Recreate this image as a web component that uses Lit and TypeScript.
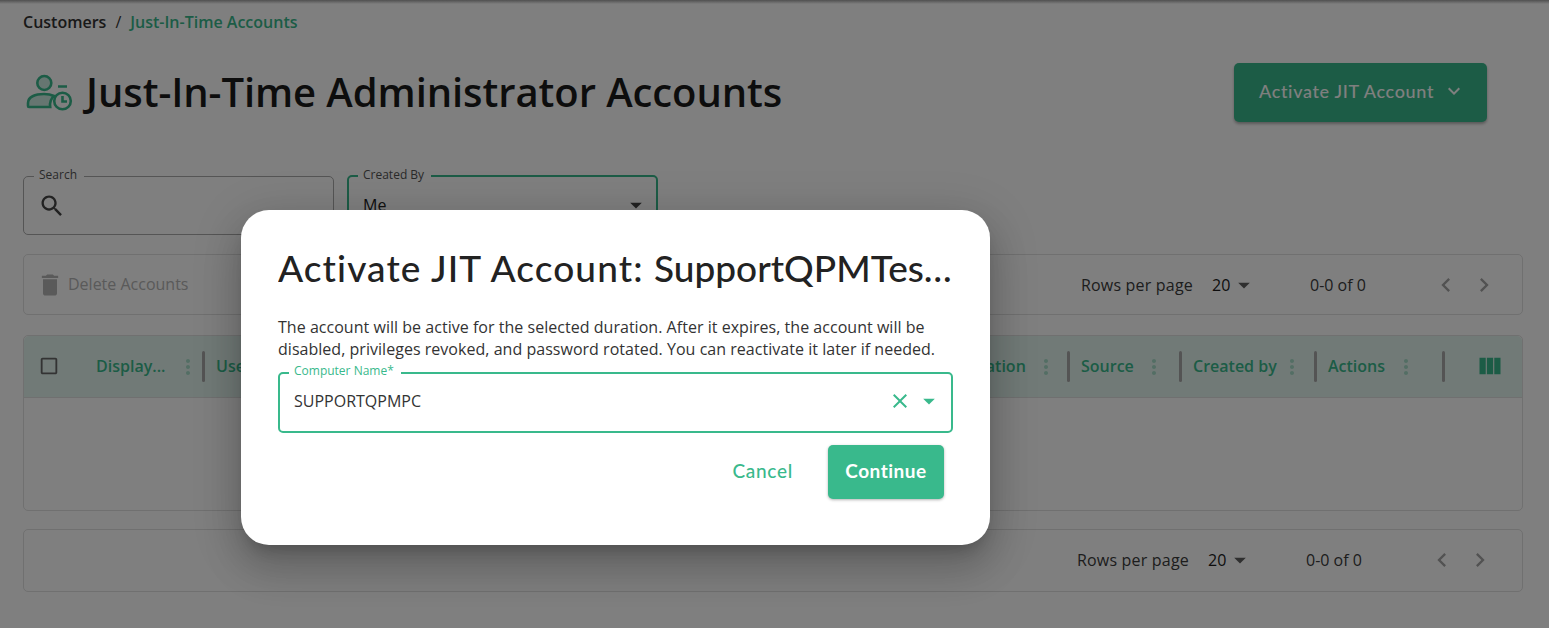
import { LitElement, html, css, svg } from "lit";
import { customElement, property } from "lit/decorators.js";

const icon = (d: string, size = 24) => html`<svg class="icon" width=${size} height=${size} viewBox="0 0 24 24" fill="currentColor">${svg`<path d=${d}></path>`}</svg>`;

const SEARCH = "M15.5 14h-.79l-.28-.27C15.41 12.59 16 11.11 16 9.5 16 5.91 13.09 3 9.5 3S3 5.91 3 9.5 5.91 16 9.5 16c1.61 0 3.09-.59 4.23-1.57l.27.28v.79l5 4.99L20.49 19l-4.99-5zm-6 0C7.01 14 5 11.99 5 9.5S7.01 5 9.5 5 14 7.01 14 9.5 11.99 14 9.5 14z";
const DELETE = "M6 19c0 1.1.9 2 2 2h8c1.1 0 2-.9 2-2V7H6v12zM19 4h-3.5l-1-1h-5l-1 1H5v2h14V4z";
const CLOSE = "M19 6.41L17.59 5 12 10.59 6.41 5 5 6.41 10.59 12 5 17.59 6.41 19 12 13.41 17.59 19 19 17.59 13.41 12z";
const DROP = "M7 10l5 5 5-5z";
const LEFT = "M15.41 7.41 14 6l-6 6 6 6 1.41-1.41L10.83 12z";
const RIGHT = "M10 6 8.59 7.41 13.17 12l-4.58 4.59L10 18l6-6z";
const EXPAND = "M16.59 8.59 12 13.17 7.41 8.59 6 10l6 6 6-6z";
const DOTS = "M12 8c1.1 0 2-.9 2-2s-.9-2-2-2-2 .9-2 2 .9 2 2 2zm0 2c-1.1 0-2 .9-2 2s.9 2 2 2 2-.9 2-2-.9-2-2-2zm0 6c-1.1 0-2 .9-2 2s.9 2 2 2 2-.9 2-2-.9-2-2-2z";
const COLUMNS = "M14.67 5v14H9.33V5h5.34zm1 14H21V5h-5.33v14zm-7.34 0V5H3v14h5.33z";
const CHECKBOX = "M19 5v14H5V5h14m0-2H5c-1.1 0-2 .9-2 2v14c0 1.1.9 2 2 2h14c1.1 0 2-.9 2-2V5c0-1.1-.9-2-2-2z";

const COLS = [
  { label: "Display...", width: 121, dots: 100 },
  { label: "Username", width: 186, dots: 120 },
  { label: "Status", width: 186, dots: 120 },
  { label: "Computer", width: 186, dots: 120 },
  { label: "Expires", width: 183, dots: 120 },
  { label: "Duration", width: 124, dots: 96 },
  { label: "Source", width: 112, dots: 80 },
  { label: "Created by", width: 135, dots: 106 },
  { label: "Actions", width: 128, dots: 85 },
];

@customElement("row-pager")
class RowPager extends LitElement {
  @property({ type: Number }) inset = 24;

  static styles = css`
    :host {
      display: flex;
      align-items: center;
      justify-content: flex-end;
      font-family: "Open Sans", sans-serif;
      font-size: 16px;
      font-weight: 500;
      color: #3a3a3a;
    }
    .icon { display: block; }
    .label { letter-spacing: 0.2px; }
    .size {
      display: flex;
      align-items: center;
      margin-left: 19px;
      color: #1a1a1a;
      width: 76px;
    }
    .size .icon { color: #5e5e5e; }
    .range { margin-left: 22px; width: 122px; }
    .nav { display: flex; gap: 10px; color: #a4a4a4; }
  `;

  render() {
    return html`
      <span class="label">Rows per page</span>
      <span class="size">20 ${icon(DROP, 28)}</span>
      <span class="range">0-0 of 0</span>
      <span class="nav" style="margin-right: ${this.inset}px">${icon(LEFT, 28)}${icon(RIGHT, 28)}</span>
    `;
  }
}

@customElement("app-root")
export class AppRoot extends LitElement {
  static styles = css`
    :host {
      display: block;
      position: relative;
      height: 628px;
      overflow: hidden;
      background: #fff;
      font-family: "Open Sans", sans-serif;
      color: #333;
    }
    .icon { display: block; }
    .page { padding: 12px 26px 0 23px; }
    .crumbs {
      display: flex;
      font-size: 16px;
      font-weight: 600;
      line-height: 21px;
      color: #333;
    }
    .crumbs .sep { margin: 0 9px; font-weight: 400; }
    .crumbs .here { color: #39b98c; }
    .head {
      display: flex;
      align-items: center;
      justify-content: space-between;
      margin-top: 30px;
      padding-right: 36px;
    }
    .title { display: flex; align-items: center; }
    .title svg { margin: 0 13px 0 3px; }
    h1 {
      margin: 0 0 2px;
      font-size: 40px;
      font-weight: 600;
      line-height: 57px;
      letter-spacing: -0.08px;
      color: #1b1b1b;
    }
    .activate {
      display: flex;
      align-items: center;
      justify-content: space-between;
      box-sizing: border-box;
      width: 253px;
      height: 59px;
      padding: 0 21px 3px 25px;
      border-radius: 5px;
      background: #39b98c;
      color: #fff;
      font-family: Lato, sans-serif;
      font-size: 18px;
      font-weight: 500;
      letter-spacing: 0.65px;
      box-shadow: 0 2px 3px rgba(0, 0, 0, 0.3);
    }
    .filters { display: flex; gap: 13px; margin-top: 47px; }
    fieldset {
      box-sizing: border-box;
      display: flex;
      align-items: center;
      justify-content: space-between;
      width: 311px;
      height: 66px;
      margin: 0;
      padding: 0 15px 6px 14px;
      border: 1px solid #aaa;
      border-radius: 5px;
      min-width: 0;
      font-size: 16px;
    }
    legend {
      padding: 0 7px 0 5px;
      margin-left: -4px;
      font-size: 12px;
      line-height: 14px;
      color: #555;
      transform: translateY(-1px);
    }
    fieldset.focus { border: 2px solid #39b98c; padding: 0 6px 6px 14px; }
    fieldset.focus legend { margin-left: -5px; }
    .filters .icon { color: #444; }
    .search { color: #333; }
    .me { color: #222; }
    .box {
      border: 1px solid #e0e0e0;
      border-radius: 5px;
    }
    .toolbar {
      display: flex;
      align-items: center;
      justify-content: space-between;
      box-sizing: border-box;
      height: 61px;
      margin-top: 19px;
      padding-left: 12px;
    }
    .remove {
      display: flex;
      align-items: center;
      gap: 4px;
      font-size: 16px;
      line-height: 20px;
      color: #b4b4b4;
    }
    .remove span { margin-top: -2px; }
    .table { margin-top: 20px; height: 176px; box-sizing: border-box; }
    .cols {
      display: flex;
      align-items: center;
      box-sizing: border-box;
      height: 62px;
      padding-bottom: 1px;
      background: #e3f5ef;
      border-bottom: 1px solid #e0e0e0;
      border-radius: 5px 5px 0 0;
      color: #39b98c;
      font-size: 16px;
      font-weight: 600;
    }
    .check { width: 60px; padding-left: 14px; box-sizing: border-box; color: #666; }
    .col {
      position: relative;
      flex: none;
      box-sizing: border-box;
      height: 31px;
      line-height: 31px;
      padding-left: 11px;
      white-space: nowrap;
    }
    .check + .col { padding-left: 12px; }
    .rule {
      position: absolute;
      right: 0;
      top: 0;
      width: 3px;
      height: 31px;
      border-radius: 2px;
      background: #a9a9a9;
    }
    .dots { position: absolute; top: 4px; color: #a6dcc9; }
    .picker { margin-left: 31px; color: #39b98c; }
    .foot {
      display: flex;
      justify-content: flex-end;
      height: 63px;
      margin-top: 18px;
      padding-bottom: 2px;
      box-sizing: border-box;
    }
    .backdrop {
      position: absolute;
      inset: 0;
      background: rgba(0, 0, 0, 0.5);
    }
    .edge {
      position: absolute;
      left: 0;
      right: 0;
      top: 0;
      height: 4px;
      background: linear-gradient(#505050, rgba(80, 80, 80, 0));
    }
    .modal {
      position: absolute;
      left: 241px;
      top: 210px;
      width: 749px;
      height: 335px;
      box-sizing: border-box;
      padding: 34px 37px 0 37px;
      border-radius: 28px;
      background: #fff;
      box-shadow: 0 11px 15px -7px rgba(0, 0, 0, 0.2), 0 24px 38px 3px rgba(0, 0, 0, 0.14), 0 9px 46px 8px rgba(0, 0, 0, 0.12);
    }
    h2 {
      margin: 0;
      font-family: Lato, sans-serif;
      font-size: 37px;
      font-weight: 500;
      line-height: 48px;
      letter-spacing: 1.1px;
      color: #222;
      white-space: nowrap;
      overflow: hidden;
      text-overflow: ellipsis;
    }
    h2 span { letter-spacing: 0; }
    .modal p {
      margin: 24px 0 0;
      width: 675px;
      font-size: 16px;
      line-height: 22px;
      letter-spacing: 0.03px;
      color: #333;
    }
    .modal fieldset {
      width: 675px;
      height: 67px;
      margin-top: 6px;
      padding: 0 8px 10px 14px;
      border-color: #39b98c;
    }
    .modal legend { color: #39b98c; transform: translateY(-2px); }
    .modal fieldset .value { font-size: 16px; color: #333; }
    .tail { display: flex; align-items: center; gap: 3px; color: #39b98c; }
    .actions {
      display: flex;
      align-items: center;
      justify-content: flex-end;
      gap: 35px;
      margin-top: 12px;
      padding-right: 9px;
      font-family: Lato, sans-serif;
      font-size: 19px;
      font-weight: 500;
    }
    .cancel { color: #39b98c; letter-spacing: 0.7px; margin-bottom: 4px; }
    .continue {
      display: flex;
      align-items: center;
      justify-content: center;
      box-sizing: border-box;
      width: 116px;
      height: 54px;
      padding-bottom: 4px;
      border-radius: 5px;
      background: #39b98c;
      color: #fff;
      font-weight: 700;
      letter-spacing: 0.5px;
      box-shadow: 0 1px 3px rgba(0, 0, 0, 0.3);
    }
  `;

  render() {
    return html`
      <div class="page">
        <div class="crumbs">
          <span>Customers</span><span class="sep">/</span><span class="here">Just-In-Time Accounts</span>
        </div>
        <div class="head">
          <div class="title">
            <svg width="47" height="40" viewBox="0 0 47 40" fill="none" stroke="#39b98c" stroke-width="2.6">
              <circle cx="18.300" cy="10" r="7" fill="#39b98c" fill-opacity="0.25"></circle>
              <path d="M2 33v-3c0-6 7-9 16-9 4 0 7 .5 10 2-3 2.500-4.500 6-3.800 11H3c-.6 0-1-.4-1-1z" fill="#39b98c" fill-opacity="0.25"></path>
              <circle cx="36.500" cy="28" r="8.300"></circle>
              <path d="M36.500 23v5.500h4.500M32 13.500h9"></path>
            </svg>
            <h1>Just-In-Time Administrator Accounts</h1>
          </div>
          <div class="activate">Activate JIT Account ${icon(EXPAND)}</div>
        </div>
        <div class="filters">
          <fieldset>
            <legend>Search</legend>
            <span class="search">${icon(SEARCH, 28)}</span>
          </fieldset>
          <fieldset class="focus">
            <legend>Created By</legend>
            <span class="me">Me</span>
            ${icon(DROP, 28)}
          </fieldset>
        </div>
        <div class="box toolbar">
          <span class="remove">${icon(DELETE, 28)} <span>Delete Accounts</span></span>
          <row-pager inset="24"></row-pager>
        </div>
        <div class="box table">
          <div class="cols">
            <div class="check">${icon(CHECKBOX, 22)}</div>
            ${COLS.map(
              (c) => html`<div class="col" style="width: ${c.width}px">
                ${c.label}
                <span class="dots" style="left: ${c.dots - 8}px">${icon(DOTS)}</span>
                <span class="rule"></span>
              </div>`,
            )}
            <div class="picker">${icon(COLUMNS, 28)}</div>
          </div>
        </div>
        <div class="box foot">
          <row-pager inset="28"></row-pager>
        </div>
      </div>
      <div class="backdrop"></div>
      <div class="edge"></div>
      <div class="modal">
        <h2>Activate JIT Account: <span>SupportQPMTest-Administrator</span></h2>
        <p>The account will be active for the selected duration. After it expires, the account will be disabled, privileges revoked, and password rotated. You can reactivate it later if needed.</p>
        <fieldset class="focus">
          <legend>Computer Name*</legend>
          <span class="value">SUPPORTQPMPC</span>
          <span class="tail">${icon(CLOSE)}${icon(DROP, 28)}</span>
        </fieldset>
        <div class="actions">
          <span class="cancel">Cancel</span>
          <span class="continue">Continue</span>
        </div>
      </div>
    `;
  }
}
